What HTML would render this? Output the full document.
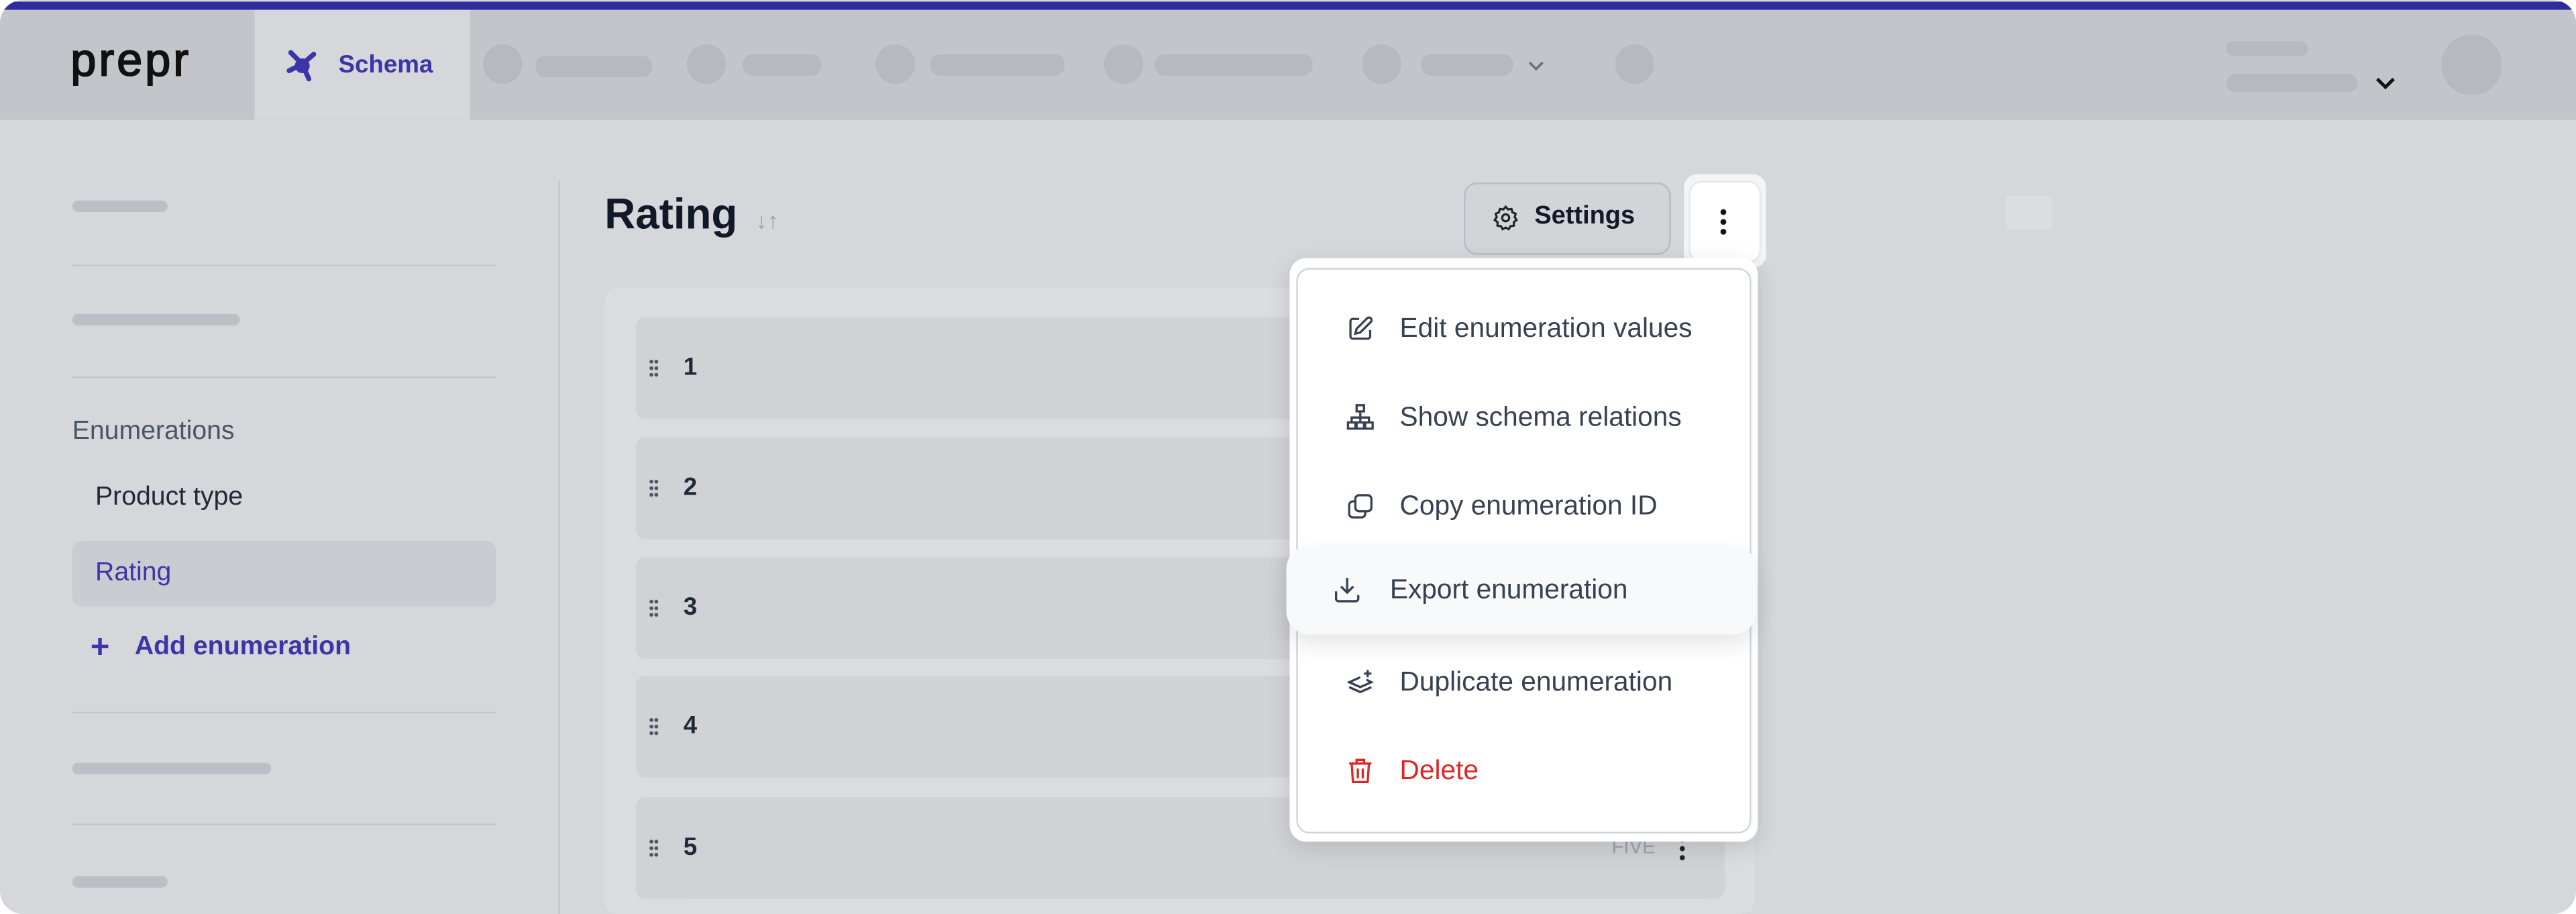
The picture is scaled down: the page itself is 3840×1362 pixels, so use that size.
<!DOCTYPE html>
<html><head><meta charset="utf-8"><style>
html,body{margin:0;padding:0;background:#fff;width:3840px;height:1362px;overflow:hidden}
#w{position:absolute;left:0;top:0;width:1568px;height:556px;transform:scale(2.449,2.4496);transform-origin:0 0;font-family:"Liberation Sans",sans-serif;color:#111827}
#frame{position:absolute;left:0;top:0;width:1568px;height:556px;border-radius:14px;overflow:hidden;background:#d6d7db}
.a{position:absolute}
.pill{position:absolute;background:#b6b9c0;border-radius:6px}
.spill{position:absolute;background:#bcbfc5;border-radius:4px;height:7px}
.circ{position:absolute;background:#b6b9c0;border-radius:50%}
.line{position:absolute;left:44px;width:258px;height:1px;background:#c3c5ca}
.row{position:absolute;left:387px;width:663px;height:62px;background:#d1d2d6;border-radius:6px}
.row .h{position:absolute;left:8px;top:25px;width:6px;height:12px;background:radial-gradient(circle,#4b5563 1px,transparent 1.3px) 0 0/3px 4px}
.row .n{position:absolute;left:29px;top:22px;font-size:15px;font-weight:bold;color:#1f2937}
.mi{position:absolute;left:852px;font-size:16.6px;color:#374151}
.ic{position:absolute;left:819px;width:18px;height:18px}
</style></head><body><div id="w"><div id="frame">
<div class="a" style="left:0;top:1px;width:1568px;height:5px;background:#2f2b9c"></div>
<div class="a" style="left:0;top:6px;width:1568px;height:67px;background:#c3c5cb"></div>
<div class="a" style="left:155px;top:6px;width:131px;height:67px;background:#d5d7db"></div>
<div class="a" style="left:43px;top:21px;font-size:28px;letter-spacing:1.6px;color:#111;-webkit-text-stroke:0.8px #111">prepr</div>
<svg class="a" style="left:172px;top:29px" width="24" height="22" viewBox="0 0 24 22"><g fill="#3b35a8" stroke="#3b35a8" stroke-width="3" stroke-linecap="round"><path d="M5 3 L12 10 L19 4 M12 10 L4 14 M12 10 L16 19" fill="none"/><circle cx="12" cy="11" r="3"/></g></svg>
<div class="a" style="left:206px;top:31px;font-size:15px;font-weight:bold;color:#3b35a8">Schema</div>
<div class="circ" style="left:294px;top:27px;width:24px;height:24px"></div><div class="pill" style="left:326px;top:34px;width:71px;height:13px"></div>
<div class="circ" style="left:418px;top:27px;width:24px;height:24px"></div><div class="pill" style="left:452px;top:33px;width:48px;height:13px"></div>
<div class="circ" style="left:533px;top:27px;width:24px;height:24px"></div><div class="pill" style="left:566px;top:33px;width:82px;height:13px"></div>
<div class="circ" style="left:672px;top:27px;width:24px;height:24px"></div><div class="pill" style="left:703px;top:33px;width:96px;height:13px"></div>
<div class="circ" style="left:829px;top:27px;width:24px;height:24px"></div><div class="pill" style="left:865px;top:33px;width:56px;height:13px"></div>
<svg class="a" style="left:929px;top:35px" width="12" height="10"><path d="M2 3 L6 7 L10 3" stroke="#6b7280" stroke-width="1.5" fill="none"/></svg>
<div class="circ" style="left:983px;top:27px;width:24px;height:24px"></div>
<div class="pill" style="left:1355px;top:25px;width:50px;height:9px"></div>
<div class="pill" style="left:1355px;top:45px;width:80px;height:11px"></div>
<svg class="a" style="left:1445px;top:45px" width="14" height="12"><path d="M2 3 L7 8 L12 3" stroke="#111" stroke-width="2" fill="none"/></svg>
<div class="circ" style="left:1486px;top:21px;width:37px;height:37px"></div>

<div class="spill" style="left:44px;top:122px;width:58px"></div>
<div class="line" style="top:161px"></div>
<div class="spill" style="left:44px;top:191px;width:102px"></div>
<div class="line" style="top:229px"></div>
<div class="a" style="left:44px;top:254px;font-size:16px;color:#4b5563">Enumerations</div>
<div class="a" style="left:58px;top:294px;font-size:16px;color:#1f2937">Product type</div>
<div class="a" style="left:44px;top:329px;width:258px;height:40px;background:#cbccd1;border-radius:6px"></div>
<div class="a" style="left:58px;top:340px;font-size:16px;color:#3b35a8">Rating</div>
<div class="a" style="left:55px;top:383px;font-size:20px;color:#3b35a8;font-weight:bold">+</div>
<div class="a" style="left:82px;top:385px;font-size:16px;font-weight:bold;color:#3b35a8">Add enumeration</div>
<div class="line" style="top:433px"></div>
<div class="spill" style="left:44px;top:464px;width:121px"></div>
<div class="line" style="top:501px"></div>
<div class="spill" style="left:44px;top:533px;width:58px"></div>
<div class="a" style="left:340px;top:110px;width:1px;height:446px;background:#c3c5ca"></div>

<div class="a" style="left:368px;top:115px;font-size:26px;font-weight:bold">Rating</div>
<div class="a" style="left:460px;top:126px;font-size:14px;color:#9ca3af">↓↑</div>
<div class="a" style="left:1221px;top:119px;width:28px;height:21px;background:#dcdde0;border-radius:2px"></div>
<div class="a" style="left:891px;top:111px;width:126px;height:44px;border:1px solid #b9bcc2;border-radius:8px;background:#d2d4d8;box-sizing:border-box"></div>
<svg class="a" style="left:908px;top:124px" width="17" height="17" viewBox="0 0 24 24" fill="none" stroke="#222" stroke-width="1.8"><circle cx="12" cy="12" r="3"/><path d="M12 2.5l2 2.3 3-.4.8 2.9 2.8 1.2-.9 2.9 1.7 2.5-2.4 1.8.1 3-3 .5-1.5 2.6-2.6-1.4-2.6 1.4-1.5-2.6-3-.5.1-3-2.4-1.8 1.7-2.5-.9-2.9 2.8-1.2.8-2.9 3 .4z"/></svg>
<div class="a" style="left:934px;top:123px;font-size:15.5px;font-weight:bold">Settings</div>
<div class="a" style="left:1025px;top:106px;width:50px;height:57px;background:#f3f4f6;border-radius:8px"></div>
<div class="a" style="left:1028px;top:110px;width:44px;height:50px;background:#fff;border:1px solid #e5e7eb;border-radius:8px;box-sizing:border-box"></div>
<div class="a" style="left:1047px;top:126px;width:4px;height:17px;background:radial-gradient(circle,#111 1.6px,transparent 1.9px) 0 0/4px 6px"></div>

<div class="a" style="left:368px;top:175px;width:700px;height:381px;background:#dbdcdf;border-radius:8px"></div>
<div class="row" style="top:193px"><div class="h"></div><div class="n">1</div></div>
<div class="row" style="top:266px"><div class="h"></div><div class="n">2</div></div>
<div class="row" style="top:339px"><div class="h"></div><div class="n">3</div></div>
<div class="row" style="top:411px"><div class="h"></div><div class="n">4</div></div>
<div class="row" style="top:485px"><div class="h"></div><div class="n">5</div>
<div class="a" style="left:594px;top:23px;font-size:12px;color:#9ca3af">FIVE</div>
<div class="a" style="left:635px;top:23px;width:4px;height:16px;background:radial-gradient(circle,#222 1.4px,transparent 1.7px) 0 0/4px 5.5px"></div></div>

<div class="a" style="left:785px;top:157px;width:285px;height:355px;background:#fff;border-radius:10px;box-shadow:0 4px 14px rgba(0,0,0,.12)"></div>
<div class="a" style="left:789px;top:163px;width:277px;height:344px;border:1px solid #d1d5db;border-radius:8px;box-sizing:border-box"></div>
<svg class="ic" style="top:191px" viewBox="0 0 24 24" fill="none" stroke="#374151" stroke-width="1.8"><path d="M11 4H6a2 2 0 0 0-2 2v12a2 2 0 0 0 2 2h12a2 2 0 0 0 2-2v-5"/><path d="M17.5 3.5a2 2 0 0 1 3 3L12 15l-4 1 1-4z"/></svg>
<div class="mi" style="top:190px">Edit enumeration values</div>
<svg class="ic" style="top:245px" viewBox="0 0 24 24" fill="none" stroke="#374151" stroke-width="1.8"><rect x="9" y="2" width="6" height="5"/><rect x="2" y="16" width="6" height="5"/><rect x="16" y="16" width="6" height="5"/><path d="M12 7v5M5 16v-4h14v4M12 12v4"/><rect x="9" y="16" width="6" height="5"/></svg>
<div class="mi" style="top:244px">Show schema relations</div>
<svg class="ic" style="top:299px" viewBox="0 0 24 24" fill="none" stroke="#374151" stroke-width="1.8"><rect x="8" y="3" width="13" height="13" rx="3"/><path d="M16 16v2a3 3 0 0 1-3 3H6a3 3 0 0 1-3-3v-7a3 3 0 0 1 3-3h2"/></svg>
<div class="mi" style="top:298px">Copy enumeration ID</div>
<div class="a" style="left:783px;top:332px;width:286px;height:54px;background:#f8f9fa;border-radius:14px;box-shadow:0 6px 14px rgba(0,0,0,.10)"></div>
<svg class="ic" style="left:811px;top:350px" viewBox="0 0 24 24" fill="none" stroke="#374151" stroke-width="1.8"><path d="M12 2v12M7 9l5 5 5-5M3 13v6a2 2 0 0 0 2 2h14a2 2 0 0 0 2-2v-3"/></svg>
<div class="mi" style="left:846px;top:349px">Export enumeration</div>
<svg class="ic" style="top:406px" viewBox="0 0 24 24" fill="none" stroke="#374151" stroke-width="1.8"><path d="M12 8L3 12l9 4 9-4-4-2M3 16l9 4 9-4M18 2v6M15 5h6"/></svg>
<div class="mi" style="top:405px">Duplicate enumeration</div>
<svg class="ic" style="top:460px" viewBox="0 0 24 24" fill="none" stroke="#dc2626" stroke-width="1.8"><path d="M3 6h18M9 6V3h6v3M5 6l1 15h12l1-15M10 10v8M14 10v8"/></svg>
<div class="mi" style="top:459px;color:#dc2626">Delete</div>
</div></div></body></html>
